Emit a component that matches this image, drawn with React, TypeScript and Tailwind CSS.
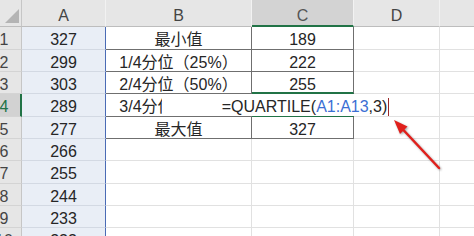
import React from 'react';

const HEIGHTS = [
  'h-[23px]',
  'h-[22px]',
  'h-[22px]',
  'h-[23px]',
  'h-[22px]',
  'h-[22px]',
  'h-[23px]',
  'h-[22px]',
  'h-[22px]',
  'h-[12px]',
];

const COL_A = ['327', '299', '303', '289', '277', '266', '255', '244', '233', '222'];
const COL_B = ['最小值', '1/4分位（25%）', '2/4分位（50%）', '3/4分位（75%）', '最大值', '', '', '', '', ''];
const COL_C = ['189', '222', '255', '', '327', '', '', '', '', ''];

function HeaderRow() {
  return (
    <div className="flex h-[27px] text-[#444]">
      <div className="relative w-[22px] shrink-0 bg-[#e6e6e6] border-b border-r border-b-[#bdbdbd] border-r-[#c6c6c6]">
        <svg className="absolute left-0 top-0" width="21" height="26" viewBox="0 0 21 26">
          <polygon points="5,23 19,23 19,9" fill="#b4b4b4" />
        </svg>
      </div>
      <div className="w-[84px] shrink-0 bg-[#e6e6e6] border-b border-r border-b-[#bdbdbd] border-r-[#f2f2f2] text-center pt-[7px] leading-[18px]">
        A
      </div>
      <div className="w-[146px] shrink-0 bg-[#e6e6e6] border-b border-r border-b-[#bdbdbd] border-r-[#f2f2f2] text-center pt-[7px] leading-[18px]">
        B
      </div>
      <div className="w-[102px] shrink-0 bg-[#d3d3d3] border-b-2 border-r border-b-[#217346] border-r-[#f2f2f2] text-center pt-[7px] leading-[18px] text-[#555]">
        C
      </div>
      <div className="w-[86px] shrink-0 bg-[#e6e6e6] border-b border-r border-b-[#bdbdbd] border-r-[#f2f2f2] text-center pt-[7px] leading-[18px]">
        D
      </div>
      <div className="flex-1 bg-[#e6e6e6] border-b border-b-[#bdbdbd]" />
    </div>
  );
}

function Row({ i }: { i: number }) {
  const active = i === 3;
  const inTable = i < 5;
  const rowHeader = active
    ? 'bg-[#d2d2d2] border-r-2 border-r-[#217346] text-[#217346]'
    : 'bg-[#e6e6e6] border-r border-r-[#c6c6c6] text-[#444]';
  const bCell = inTable
    ? 'border-b-[#6f6f6f] border-r-[#6f6f6f]'
    : 'border-b-[#e1e1e1] border-r-[#e1e1e1]';
  let cCell = 'border-b border-r border-b-[#e1e1e1] border-r-[#e1e1e1]';
  if (inTable) cCell = 'border-b border-r border-b-[#6f6f6f] border-r-[#6f6f6f]';
  if (i === 2 || i === 3) cCell = 'border-b-2 border-r border-b-[#217346] border-r-[#6f6f6f]';

  return (
    <div className={`relative flex ${HEIGHTS[i]}`}>
      <div className={`w-[22px] shrink-0 overflow-hidden border-b border-b-[#d4d4d4] ${rowHeader}`}>
        <div className="w-[40px] -ml-[16px] text-center pt-[4px] leading-[18px]">{i + 1}</div>
      </div>
      <div className="w-[84px] shrink-0 bg-[#e9eef6] border-b border-r border-b-[#d3d9e3] border-r-[#4a6bb5] text-center pt-[4px] leading-[18px]">
        {COL_A[i]}
      </div>
      <div className={`w-[146px] shrink-0 border-b border-r ${bCell} text-center pt-[4px] leading-[18px] whitespace-nowrap overflow-hidden`}>
        {COL_B[i]}
      </div>
      <div className={`w-[102px] shrink-0 ${cCell} text-center pt-[4px] leading-[18px]`}>{COL_C[i]}</div>
      <div className="w-[86px] shrink-0 border-b border-r border-b-[#e1e1e1] border-r-[#e1e1e1]" />
      <div className="flex-1 border-b border-b-[#e1e1e1]" />
      {active && (
        <div className="absolute left-[162px] top-0 w-[275px] h-[22px] bg-white text-center pl-[10px] pt-[4px] leading-[18px] whitespace-nowrap">
          =QUARTILE(<span className="text-[#3b6fd4]">A1:A13</span>,3)
          <span className="inline-block w-[1px] h-[18px] bg-[#9a2a2a] align-[-4px] ml-[1px] -mr-[2px]" />
        </div>
      )}
    </div>
  );
}

export default function App() {
  return (
    <div className="relative w-[474px] h-[236px] overflow-hidden bg-white text-[16px] text-[#262626] font-['Liberation_Sans','Noto_Sans_CJK_SC',sans-serif]">
      <HeaderRow />
      {HEIGHTS.map((_, i) => (
        <Row key={i} i={i} />
      ))}
      <svg
        className="absolute left-0 top-0 pointer-events-none drop-shadow-[1px_1px_1px_rgba(0,0,0,0.35)]"
        width="474"
        height="236"
        viewBox="0 0 474 236"
      >
        <line x1="439" y1="168" x2="402" y2="128.5" stroke="#e0201c" strokeWidth="2.5" strokeLinecap="round" />
        <polygon points="394,120 407.5,126.5 400,134" fill="#e0201c" />
      </svg>
    </div>
  );
}
